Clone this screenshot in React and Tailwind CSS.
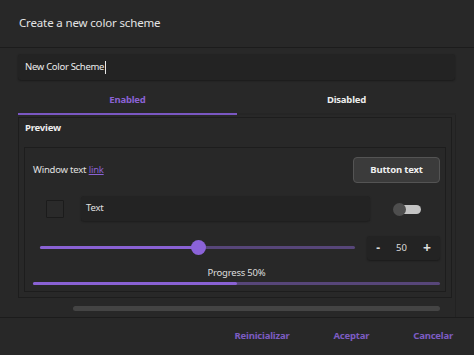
import React from "react";

const font = { fontFamily: '"Noto Sans", "Open Sans", sans-serif' };

export default function App() {
  return (
    <div style={font} className="w-[474px] h-[355px] bg-[#282828] flex flex-col overflow-hidden text-[#e4e4e4]">
      {/* header */}
      <div className="h-[48px] shrink-0 flex items-center px-[19px] pb-[2px] border-b border-[#1c1c1c]">
        <span className="text-[11.5px] tracking-[-0.15px]">Create a new color scheme</span>
      </div>

      <div className="flex-1 flex flex-col px-[18px] pt-[6px]">
        {/* name input */}
        <div className="h-[26px] rounded-[3px] bg-[#232323] shadow-[0_1px_2px_rgba(0,0,0,0.35)] flex items-center px-[7px] mr-[1px]">
          <span className="text-[9.5px] tracking-[-0.3px] text-[#ececec]">New Color Scheme</span>
          <span className="w-px h-[13px] bg-[#e8e8e8] ml-px" />
        </div>

        {/* tabs */}
        <div className="grid grid-cols-2 mt-[5px]">
          <div className="flex flex-col">
            <div className="h-[28px] flex items-center justify-center pt-[2px] text-[9.5px] tracking-[-0.2px] font-bold text-[#8a62d4]">Enabled</div>
            <div className="h-[2px] bg-[#7a57c2]" />
          </div>
          <div className="flex flex-col">
            <div className="h-[28px] flex items-center justify-center pt-[2px] text-[9.5px] tracking-[-0.2px] font-bold text-[#ededed]">Disabled</div>
            <div className="h-[2px] bg-[#252525]" />
          </div>
        </div>

        {/* tab page */}
        <div className="flex-1 flex flex-col border-r border-[#222] pt-[2px]">
          {/* preview group */}
          <div className="border border-[#1d1d1d] mr-[3px] pl-[5px] pr-[5px] pb-[5px] flex flex-col">
            <div className="h-[29px] flex items-center pl-[1px] pb-[8px] text-[9.5px] tracking-[-0.2px] font-bold text-[#ededed]">Preview</div>
            <div className="border border-[#1d1d1d] pl-[8px] pr-[5px] pt-[9px] pb-[6px] flex flex-col">
              {/* row 1 */}
              <div className="flex items-center justify-between h-[26px]">
                <span className="text-[9.5px] tracking-[-0.2px] text-[#e0e0e0]">
                  Window text <span className="text-[#8a62d4] underline">link</span>
                </span>
                <div className="h-[26px] w-[87px] rounded-[4px] bg-[#3b3b3b] border border-[#545454] flex items-center justify-center text-[9.5px] tracking-[-0.2px] font-bold text-[#f0f0f0]">
                  Button text
                </div>
              </div>

              {/* row 2 */}
              <div className="flex items-center h-[25px] mt-[13px]">
                <div className="ml-[13px] w-[18px] h-[18px] border border-[#1b1b1b] bg-[#2a2a2a] rounded-[1px]" />
                <div className="ml-[17px] w-[289px] h-[25px] rounded-[3px] bg-[#232323] shadow-[0_1px_2px_rgba(0,0,0,0.3)] flex items-center px-[5px] text-[9.5px] tracking-[-0.2px] text-[#e0e0e0]">
                  Text
                </div>
                <div className="ml-[23px] relative w-[28px] h-[12px]">
                  <div className="absolute left-[6px] right-0 top-[2px] h-[9px] rounded-full bg-[#c4c4c4]" />
                  <div className="absolute left-0 top-0 w-[13px] h-[13px] rounded-full bg-[#4e4e4e]" />
                </div>
              </div>

              {/* row 3 */}
              <div className="flex items-center h-[24px] mt-[15px]">
                <div className="ml-[7px] w-[316px] relative h-[16px]">
                  <div className="absolute left-0 right-0 top-[6px] h-[3px] rounded-full bg-[#574679]" />
                  <div className="absolute left-0 w-[159px] top-[6px] h-[3px] rounded-full bg-[#8a62d4]" />
                  <div className="absolute left-[151px] top-0 w-[15px] h-[15px] rounded-full bg-[#8b63d8]" />
                </div>
                <div className="ml-[12px] w-[73px] h-[24px] rounded-[3px] bg-[#232323] shadow-[0_1px_2px_rgba(0,0,0,0.35)] flex items-center justify-between px-[9px] text-[#dcdcdc]">
                  <span className="text-[12px] font-bold">-</span>
                  <span className="text-[9.5px]">50</span>
                  <span className="text-[14px] font-bold leading-none">+</span>
                </div>
              </div>

              {/* progress */}
              <div className="text-center text-[9.5px] tracking-[-0.2px] text-[#dedede] mt-[6px] leading-[13px]">Progress 50%</div>
              <div className="mt-[3px] h-[3px] rounded-full bg-[#574679] relative">
                <div className="absolute left-0 top-0 h-[3px] w-1/2 rounded-full bg-[#8a62d4]" />
              </div>
            </div>
          </div>
          {/* h scrollbar */}
          <div className="mt-[8px] ml-[55px] mr-[15px] h-[5px] rounded-full bg-[#444]" />
        </div>
      </div>

      {/* footer */}
      <div className="h-[38px] shrink-0 border-t border-[#1c1c1c] flex items-center justify-end pr-[21px] gap-[44px] text-[9.5px] tracking-[-0.2px] font-bold text-[#7c5cc2]">
        <span>Reinicializar</span>
        <span>Aceptar</span>
        <span>Cancelar</span>
      </div>
    </div>
  );
}
